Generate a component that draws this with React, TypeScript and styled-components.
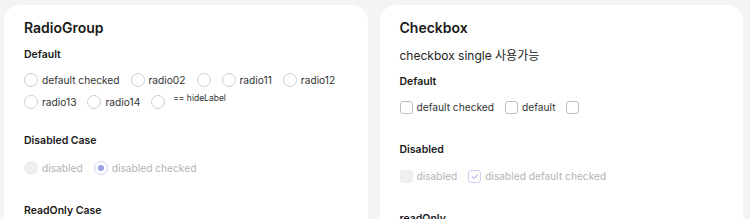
import styled, { createGlobalStyle } from "styled-components";

const GlobalStyle = createGlobalStyle`
  body {
    margin: 0;
    background-color: #f4f4f4;
    font-family: "Inter", "Noto Sans CJK KR", sans-serif;
    color: #222;
  }
`;

const Page = styled.div`
  display: flex;
  gap: 12px;
  padding: 5px 7px 0 4px;
  height: 219px;
  box-sizing: border-box;
  overflow: hidden;
`;

const Card = styled.section`
  flex: 1;
  background-color: #fff;
  border-radius: 16px 16px 0 0;
  padding: 14px 20px 0;
  box-sizing: border-box;
`;

const CardTitle = styled.h2`
  margin: 0 0 11px;
  font-size: 14px;
  line-height: 18px;
  font-weight: 600;
  color: #1a1a1a;
`;

const Subtitle = styled.p`
  margin: 1px 0 11px;
  font-size: 12px;
  line-height: 16px;
  color: #222;
`;

const SectionHead = styled.h3<{ gapTop?: number }>`
  margin: ${(p) => p.gapTop ?? 0}px 0 0;
  font-size: 10.5px;
  line-height: 14px;
  font-weight: 600;
  color: #1a1a1a;
`;

const Row = styled.div<{ gapTop?: number }>`
  display: flex;
  flex-wrap: wrap;
  align-items: center;
  column-gap: 11px;
  row-gap: 8px;
  margin-top: ${(p) => p.gapTop ?? 11}px;
`;

const Item = styled.label`
  display: flex;
  align-items: center;
  gap: 4px;
  font-size: 10.2px;
  line-height: 14px;
  color: #333;
`;

const Radio = styled.span<{ disabled?: boolean; checked?: boolean }>`
  width: 14px;
  height: 14px;
  border-radius: 50%;
  box-sizing: border-box;
  border: 1px solid
    ${(p) => (p.checked ? "#cdd0f3" : p.disabled ? "#ececec" : "#cfcfcf")};
  background-color: ${(p) => (p.disabled && !p.checked ? "#efefef" : "#fff")};
  display: flex;
  align-items: center;
  justify-content: center;
  &::after {
    content: "";
    display: ${(p) => (p.checked ? "block" : "none")};
    width: 6px;
    height: 6px;
    border-radius: 50%;
    background-color: #98a0e6;
  }
`;

const Box = styled.span<{ disabled?: boolean; checked?: boolean }>`
  width: 13px;
  height: 13px;
  border-radius: 3px;
  box-sizing: border-box;
  border: 1px solid
    ${(p) => (p.checked ? "#cdd0f3" : p.disabled ? "#ececec" : "#bdbdbd")};
  background-color: ${(p) => (p.disabled && !p.checked ? "#efefef" : "#fff")};
  display: flex;
  align-items: center;
  justify-content: center;
`;

const Label = styled.span<{ disabled?: boolean }>`
  color: ${(p) => (p.disabled ? "#b3b3b3" : "#333")};
`;

const HideNote = styled.span`
  font-size: 8.5px;
  color: #333;
  margin-left: -3px;
  align-self: flex-start;
  margin-top: -2px;
`;

const Check = () => (
  <svg width="8" height="7" viewBox="0 0 8 7" fill="none">
    <path d="M1 3.6 L3 5.5 L7 1.3" stroke="#8f97e2" strokeWidth="1" />
  </svg>
);

const App = () => {
  return (
    <>
      <GlobalStyle />
      <Page>
        <Card>
          <CardTitle>RadioGroup</CardTitle>
          <SectionHead>Default</SectionHead>
          <Row>
            <Item>
              <Radio />
              <Label>default checked</Label>
            </Item>
            <Item>
              <Radio />
              <Label>radio02</Label>
            </Item>
            <Item>
              <Radio />
            </Item>
            <Item>
              <Radio />
              <Label>radio11</Label>
            </Item>
            <Item>
              <Radio />
              <Label>radio12</Label>
            </Item>
            <Item>
              <Radio />
              <Label>radio13</Label>
            </Item>
            <Item>
              <Radio />
              <Label>radio14</Label>
            </Item>
            <Item>
              <Radio />
            </Item>
            <HideNote>== hideLabel</HideNote>
          </Row>
          <SectionHead gapTop={25}>Disabled Case</SectionHead>
          <Row gapTop={13}>
            <Item>
              <Radio disabled />
              <Label disabled>disabled</Label>
            </Item>
            <Item>
              <Radio disabled checked />
              <Label disabled>disabled checked</Label>
            </Item>
          </Row>
          <SectionHead gapTop={29}>ReadOnly Case</SectionHead>
        </Card>
        <Card>
          <CardTitle>Checkbox</CardTitle>
          <Subtitle>checkbox single 사용가능</Subtitle>
          <SectionHead>Default</SectionHead>
          <Row>
            <Item>
              <Box />
              <Label>default checked</Label>
            </Item>
            <Item>
              <Box />
              <Label>default</Label>
            </Item>
            <Item>
              <Box />
            </Item>
          </Row>
          <SectionHead gapTop={29}>Disabled</SectionHead>
          <Row gapTop={12}>
            <Item>
              <Box disabled />
              <Label disabled>disabled</Label>
            </Item>
            <Item>
              <Box disabled checked>
                <Check />
              </Box>
              <Label disabled>disabled default checked</Label>
            </Item>
          </Row>
          <SectionHead gapTop={29}>readOnly</SectionHead>
        </Card>
      </Page>
    </>
  );
};

export default App;
